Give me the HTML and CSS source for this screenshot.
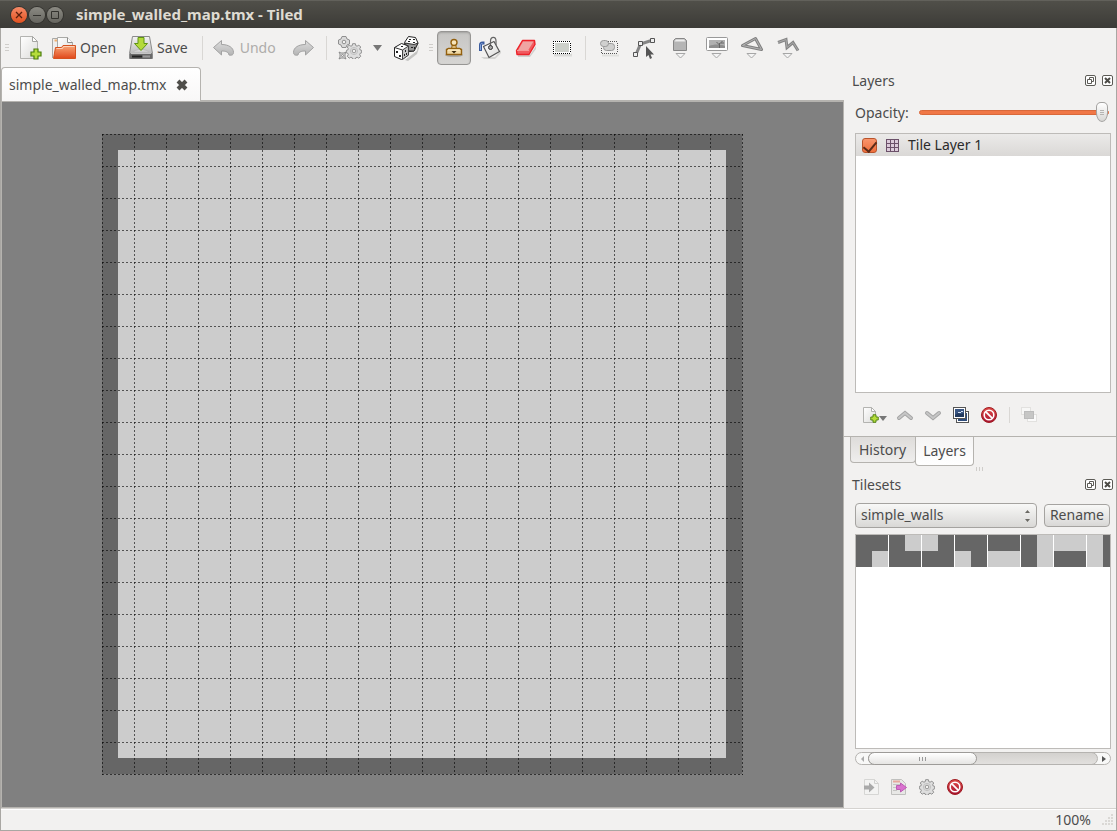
FILE: index.html
```
<!DOCTYPE html>
<html lang="en">
<head>
<meta charset="UTF-8">
<meta name="viewport" content="width=device-width, initial-scale=1.0">
<title>simple_walled_map.tmx - Tiled</title>
<link rel="stylesheet" href="styles.css">
</head>
<body>
    <!-- shared gradients and icons -->
    <svg class="defs" width="0" height="0" aria-hidden="true">
        <defs>
            <linearGradient id="paper" x1="0" y1="0" x2="1" y2="1"><stop offset="0" stop-color="#fff"/><stop offset="1" stop-color="#dcdcda"/></linearGradient>
            <linearGradient id="orange" x1="0" y1="0" x2="0" y2="1"><stop offset="0" stop-color="#f9a778"/><stop offset="1" stop-color="#e0481b"/></linearGradient>
            <linearGradient id="metal" x1="0" y1="0" x2="0" y2="1"><stop offset="0" stop-color="#f4f4f4"/><stop offset="1" stop-color="#a9a9a9"/></linearGradient>
            <linearGradient id="grey" x1="0" y1="0" x2="0" y2="1"><stop offset="0" stop-color="#dedede"/><stop offset="1" stop-color="#b4b4b4"/></linearGradient>
            <linearGradient id="red" x1="0" y1="0" x2="0" y2="1"><stop offset="0" stop-color="#e2504a"/><stop offset="1" stop-color="#a5102f"/></linearGradient>
        </defs>
        <symbol id="plus" viewBox="0 0 12 12">
            <path d="M4 1h4v3h3v4H8v3H4V8H1V4h3z" fill="#b6dd3c" stroke="#4a7d0c" stroke-width="1.2"/>
        </symbol>
        <symbol id="remove" viewBox="0 0 16 16">
            <circle cx="8" cy="8" r="7.5" fill="url(#red)" stroke="#a01c22"/>
            <circle cx="8" cy="8" r="4.8" fill="none" stroke="#fff" stroke-width="1.6"/>
            <path d="M4.600 4.600l6.800 6.800" stroke="#fff" stroke-width="1.8"/>
        </symbol>
        <symbol id="gear" viewBox="0 0 16 16">
            <path d="M6.600 .7h2.800l.4 2 1.300.5 1.700-1.100 1.900 1.900-1 1.700.5 1.300 1.500.4v2.400l-1.500.5-.5 1.300 1 1.700-1.900 1.900-1.700-1-1.300.5-.4 1.500H6.600l-.4-1.500-1.300-.5-1.700 1-1.900-1.900 1-1.700-.5-1.300-1.500-.5V7.400l1.500-.4.5-1.300-1-1.700 1.900-1.900 1.700 1.100 1.300-.5z" fill="#dedede" stroke="#8f8f8f" stroke-width="1"/>
            <circle cx="8" cy="8" r="3.600" fill="none" stroke="#c2c2c2"/>
            <circle cx="8" cy="8" r="1.800" fill="#f2f1f0" stroke="#969696"/>
        </symbol>
        <symbol id="float" viewBox="0 0 11 11">
            <rect x=".5" y=".5" width="10" height="10" rx="1.500" fill="#fff" stroke="#5c5b56"/>
            <path d="M4.500 4V2.500h4v4H7M2.500 4.500h4v4h-4z" fill="none" stroke="#5c5b56"/>
        </symbol>
        <symbol id="close" viewBox="0 0 11 11">
            <rect x=".5" y=".5" width="10" height="10" rx="1.500" fill="#fff" stroke="#5c5b56"/>
            <path d="M3 3l5 5M8 3L3 8" stroke="#4c4b46" stroke-width="2"/>
        </symbol>
        <symbol id="down" viewBox="0 0 11 6">
            <path d="M1 .5h9L5.500 5z" fill="#f4f4f4" stroke="#a6a6a6"/>
        </symbol>
    </svg>

    <header class="titlebar">
        <button class="win-btn win-close" aria-label="Close"><svg width="16" height="16"><path d="M5 5l6 6M11 5l-6 6" stroke="#5a1f0d" stroke-width="1.300"/></svg></button>
        <button class="win-btn" aria-label="Minimize"><svg width="16" height="16"><path d="M4 8.500h8" stroke="#33322e"/></svg></button>
        <button class="win-btn" aria-label="Maximize"><svg width="16" height="16"><path d="M4.500 4.500h7v7h-7z" fill="none" stroke="#33322e"/></svg></button>
        <h1>simple_walled_map.tmx - Tiled</h1>
    </header>

    <div class="window">
        <div class="toolbar" role="toolbar">
            <span class="grip"></span>
            <button class="tool" aria-label="New">
                <svg width="24" height="24">
                    <path d="M2.500 .5h12l5 5v17h-17z" fill="url(#paper)" stroke="#b3b3b0"/>
                    <path d="M14.500 .5v5h5z" fill="#fff" stroke="#a5a5a2"/>
                    <use href="#plus" x="12" y="12" width="12" height="12"/>
                </svg>
            </button>
            <button class="tool labeled">
                <svg width="24" height="24">
                    <path d="M.5 22V2.500h8v19" fill="#eee" stroke="#a9a9a6"/>
                    <path d="M2.500 4.500h4" stroke="#f0b070" stroke-width="2"/>
                    <path d="M5.500 20V1.500h10l5 5V20" fill="url(#paper)" stroke="#a9a9a6"/>
                    <path d="M15.500 1.500v5h5" fill="#fff" stroke="#8f8f8c"/>
                    <path d="M1.500 22.500L3.500 11.500h6l1.500-2h12.500v13z" fill="url(#orange)" stroke="#d5521f"/>
                    <path d="M4.500 12.500h6l1-2h11" fill="none" stroke="#fcd2b8"/>
                </svg>
                <span>Open</span>
            </button>
            <button class="tool labeled">
                <svg width="24" height="24">
                    <path d="M3.500 .5h17l3 17v5H.5v-5z" fill="url(#metal)" stroke="#8a8a8a"/>
                    <path d="M4.500 16c0-3 15-3 15 0z" fill="#e4e4e4" stroke="#bbb"/>
                    <rect x="1" y="17" width="22" height="6" rx="1" fill="#6a6a6a"/>
                    <path d="M2 17.500h20" stroke="#c5c5c5"/>
                    <path d="M3 20.500h10" stroke="#222" stroke-width="2"/>
                    <path d="M14 20.500h7" stroke="#999" stroke-width="2"/>
                    <path d="M9 1.500h6v6h3.500L12 14.500 5.500 7.500H9z" fill="#b4da3a" stroke="#5f9413"/>
                </svg>
                <span>Save</span>
            </button>
            <span class="sep"></span>
            <button class="tool labeled" disabled>
                <svg width="24" height="24">
                    <path d="M1.500 11.500l8-7v4c7 0 12 3 12 8 0 3-3 3-4.500 2.500-.5-3-3-4-7.500-4v4z" fill="url(#grey)" stroke="#a2a2a2" stroke-linejoin="round"/>
                </svg>
                <span>Undo</span>
            </button>
            <button class="tool" aria-label="Redo" disabled>
                <svg width="24" height="24">
                    <path d="M22.500 11.500l-8-7v4c-7 0-12 3-12 8 0 3 3 3 4.500 2.500.5-3 3-4 7.500-4v4z" fill="url(#grey)" stroke="#a2a2a2" stroke-linejoin="round"/>
                </svg>
            </button>
            <span class="sep"></span>
            <button class="tool" aria-label="Commands">
                <svg width="24" height="24">
                    <path d="M4 .5h4L9 3l2.500 1v4L9 9l-1 2.500H4L3 9 .5 8V4L3 3z" fill="#dadada" stroke="#8f8f8f"/>
                    <circle cx="6" cy="6" r="1.800" fill="#f2f1f0" stroke="#8f8f8f"/>
                    <use href="#gear" x="8" y="7" width="16" height="16"/>
                    <path d="M1 16l2 1h3l2-1-1 2v3l1 2-2-1H3l-2 1 1-2v-3z" fill="#ddd" stroke="#8a8a8a"/>
                    <circle cx="4.500" cy="19.500" r="1" fill="#f2f1f0" stroke="#8a8a8a"/>
                </svg>
            </button>
            <button class="drop" aria-label="Command list"><svg width="9" height="6"><path d="M0 0h9L4.500 6z" fill="#777"/></svg></button>
            <button class="tool" aria-label="Random Mode">
                <svg width="26" height="26">
                    <path d="M12 25l12-9 1-6 1 3-2 6-9 7z" fill="#c4c4c2"/>
                    <path d="M11.500 7.500l4-6 7 1 2.500 5.500-4 8-8 1z" fill="#fff" stroke="#222"/>
                    <path d="M12 8l9 1.500 4-1.500-4 8h-5z" fill="#999" stroke="#333"/>
                    <path d="M1.500 12.500l7-4 7 2.500v9l-7 4.500-7-3z" fill="#fff" stroke="#222" stroke-linejoin="round"/>
                    <path d="M9.500 15l6-4v9l-6 4.500z" fill="#c6c6c6" stroke="#444"/>
                    <path d="M1.500 12.500l8 2.500" stroke="#333"/>
                    <path d="M3 16h2v2H3zM6 20h2v2H6zM8 11h2v1H8zM12 15h1v2h-1zM11 19h1v2h-1zM13 18h1v2h-1zM16 4h2v1h-2zM20 4h2v1h-2zM15 6h2v1h-2zM20 7h2v1h-2zM18 12h2v1h-2zM21 12h1v2h-1z" fill="#222"/>
                </svg>
            </button>
            <span class="grip"></span>
            <button class="tool active" aria-label="Stamp Brush">
                <svg width="24" height="24">
                    <ellipse cx="12" cy="19" rx="9" ry="2" fill="#aaa"/>
                    <path d="M10.500 8.500h3l1 4h-5z" fill="#edcf93" stroke="#93600f"/>
                    <circle cx="12" cy="6.500" r="3" fill="#f7e4bb" stroke="#93600f" stroke-width="1.400"/>
                    <path d="M6.500 12.500h11l2 1v5h-15v-5z" fill="#f0d9a5" stroke="#93600f" stroke-width="1.400"/>
                    <path d="M6 14h12" stroke="#fff3d4"/>
                    <path d="M9.500 15h5L12 17.500z" fill="#3b2a0c"/>
                </svg>
            </button>
            <button class="tool" aria-label="Bucket Fill">
                <svg width="24" height="24">
                    <path d="M3 21h14l6-7v3l-6 6H6z" fill="#d4d4d2"/>
                    <path d="M2.500 15V9c0-1 .5-2 2-2h2" fill="none" stroke="#3b5c9e" stroke-width="3"/>
                    <path d="M2.500 14V9c0-1 .5-1.500 2-1.500" fill="none" stroke="#88a8dc"/>
                    <path d="M5.500 10.500L16 5.500l5.500 10-10.500 6z" fill="url(#paper)" stroke="#555" stroke-width="1.200" stroke-linejoin="round"/>
                    <path d="M12.500 11V5c0-5 5.500-4.500 5.500 0v4" fill="none" stroke="#666" stroke-width="1.200"/>
                    <circle cx="12.500" cy="11.500" r="2" fill="#aaa" stroke="#333"/>
                </svg>
            </button>
            <button class="tool" aria-label="Eraser">
                <svg width="24" height="24">
                    <path d="M4 19h12l6-9v3l-6 8H4z" fill="#cfcfcd"/>
                    <path d="M8.500 4.500h12l.5 4-6 10H3l-.500-4z" fill="#f15b60" stroke="#ec2229" stroke-width="1.400" stroke-linejoin="round"/>
                    <path d="M9 5.500h10.500l-5.500 9H4z" fill="#f0a4a2"/>
                    <path d="M3 14.500h12" stroke="#f79a9a"/>
                </svg>
            </button>
            <button class="tool" aria-label="Rectangular Select">
                <svg width="24" height="24">
                    <path d="M4 19h18" stroke="#dadad8" stroke-width="3"/>
                    <rect x="3" y="5" width="18" height="13" fill="#fff"/>
                    <rect x="5" y="7" width="14" height="9" fill="#cdd0ca"/>
                    <path d="M3 5.500h18M3 17.500h18M3.500 7v10M20.500 7v10" stroke="#000" stroke-dasharray="1 1"/>
                </svg>
            </button>
            <span class="sep"></span>
            <button class="tool" aria-label="Select Objects" disabled>
                <svg width="24" height="24">
                    <path d="M5 19.500h17" stroke="#e0e0de" stroke-width="2"/>
                    <path d="M9 5.500h12M5 17.500h16M4.500 12v6M20.500 7v10" stroke="#555" stroke-dasharray="1 1"/>
                    <rect x="6.500" y="7.500" width="11" height="7" rx="3" fill="#d0d0cf" stroke="#999"/>
                    <rect x="3.500" y="4.500" width="8" height="6" rx="3" fill="#d0d0cf" stroke="#999"/>
                </svg>
            </button>
            <button class="tool" aria-label="Edit Polygons" disabled>
                <svg width="24" height="24">
                    <path d="M3 18.500L7.500 8 20 4" fill="none" stroke="#858585" stroke-width="3"/>
                    <path d="M.5 16.500h4v4h-4zM5.500 5.500h4v4h-4zM17.500 2.500h4v4h-4z" fill="#eee" stroke="#555"/>
                    <path d="M13 10v11l2.500-2 1.500 4 2-1-1.500-3.500H21z" fill="#555"/>
                </svg>
            </button>
            <button class="tool" aria-label="Insert Rectangle" disabled>
                <svg width="24" height="24">
                    <path d="M6.500 2.500h9l2 2v10h-13v-10z" fill="#b5b5b5" stroke="#878787"/>
                    <path d="M7 3.500h8l1.500 2h-11z" fill="#eee"/>
                    <use href="#down" x="6" y="17" width="11" height="6"/>
                </svg>
            </button>
            <button class="tool" aria-label="Insert Tile" disabled>
                <svg width="24" height="24">
                    <rect x="1.500" y="1.500" width="21" height="13" rx="1" fill="#fff" stroke="#999"/>
                    <rect x="4" y="4" width="16" height="8" fill="#b0b0b0"/>
                    <path d="M4 10c5-2 11-2 16 0v2H4z" fill="#8e8e8e"/>
                    <path d="M14.500 12V7M14.500 9l-3-3M14.500 8l3-3M16 7h3" stroke="#666"/>
                    <use href="#down" x="6" y="17" width="11" height="6"/>
                </svg>
            </button>
            <button class="tool" aria-label="Insert Polygon" disabled>
                <svg width="24" height="24">
                    <path d="M1.500 9.500L14.500 2.500 20.500 13.500z" fill="#f2f1f0" stroke="#808080" stroke-width="3" stroke-linejoin="round"/>
                    <path d="M1.500 9.500L14.500 2.500 20.500 13.500z" fill="none" stroke="#b4b4b4" stroke-linejoin="round"/>
                    <use href="#down" x="5" y="17" width="11" height="6"/>
                </svg>
            </button>
            <button class="tool" aria-label="Insert Polyline" disabled>
                <svg width="24" height="24">
                    <path d="M1 6.500l8-3 1 8 6-5 5 8" fill="none" stroke="#858585" stroke-width="3"/>
                    <path d="M1 6.500l8-3 1 8 6-5 5 8" fill="none" stroke="#aaa"/>
                    <use href="#down" x="5" y="17" width="11" height="6"/>
                </svg>
            </button>
        </div>

        <main class="workspace">
            <section class="editor">
                <div class="doc-tabs">
                    <div class="doc-tab">
                        <span>simple_walled_map.tmx</span>
                        <button class="tab-close" aria-label="Close tab"><svg width="14" height="14"><path d="M3 3l8 8M11 3l-8 8" stroke="#4f4e4a" stroke-width="4"/></svg></button>
                    </div>
                </div>
                <div class="map-view">
                    <svg class="map" width="641" height="641">
                        <defs>
                            <pattern id="grid" width="32" height="32" patternUnits="userSpaceOnUse">
                                <path d="M0 .5h32M.5 0v32" stroke="#000" stroke-opacity=".6" stroke-dasharray="2 2"/>
                            </pattern>
                        </defs>
                        <rect width="640" height="640" fill="#666"/>
                        <rect x="16" y="16" width="608" height="608" fill="#ccc"/>
                        <rect width="641" height="641" fill="url(#grid)"/>
                    </svg>
                </div>
            </section>

            <aside class="docks">
                <section class="dock layers">
                    <div class="dock-title">
                        <h2>Layers</h2>
                        <button class="dock-btn" aria-label="Float"><svg width="11" height="11"><use href="#float"/></svg></button>
                        <button class="dock-btn" aria-label="Close"><svg width="11" height="11"><use href="#close"/></svg></button>
                    </div>
                    <div class="opacity">
                        <label for="opacity">Opacity:</label>
                        <input type="range" id="opacity" min="0" max="100" value="100">
                    </div>
                    <div class="layer-list">
                        <div class="layer">
                            <input type="checkbox" id="layer1" checked>
                            <svg width="13" height="13"><rect width="13" height="13" fill="#6b5069"/><path d="M1 1h3v3H1zM5 1h3v3H5zM9 1h3v3H9zM1 5h3v3H1zM5 5h3v3H5zM9 5h3v3H9zM1 9h3v3H1zM5 9h3v3H5zM9 9h3v3H9z" fill="#dccbda"/></svg>
                            <label for="layer1">Tile Layer 1</label>
                        </div>
                    </div>
                    <div class="dock-tools">
                        <button class="mini menu" aria-label="New Layer">
                            <svg width="24" height="16">
                                <path d="M.5 .5h8l4 4v11H.5z" fill="url(#paper)" stroke="#b3b3b0"/>
                                <path d="M8.500 .5v4h4z" fill="#fff" stroke="#b3b3b0"/>
                                <use href="#plus" x="7" y="7" width="9" height="9"/>
                                <path d="M16 9h8l-4 5z" fill="#777"/>
                            </svg>
                        </button>
                        <button class="mini" aria-label="Raise Layer" disabled><svg width="16" height="16"><path d="M2 11l6-5 6 5" fill="none" stroke="#a5a5a5" stroke-width="4" stroke-linecap="round"/><path d="M2 11l6-5 6 5" fill="none" stroke="#c6c6c6" stroke-width="2" stroke-linecap="round"/></svg></button>
                        <button class="mini" aria-label="Lower Layer" disabled><svg width="16" height="16"><path d="M2 6l6 5 6-5" fill="none" stroke="#a5a5a5" stroke-width="4" stroke-linecap="round"/><path d="M2 6l6 5 6-5" fill="none" stroke="#c6c6c6" stroke-width="2" stroke-linecap="round"/></svg></button>
                        <button class="mini" aria-label="Duplicate Layer">
                            <svg width="16" height="16">
                                <rect x="3.500" y="4.500" width="12" height="11" fill="#fff" stroke="#555"/>
                                <rect x="5" y="6" width="9" height="8" fill="#2f4d7c"/>
                                <rect x=".5" y=".5" width="12" height="11" fill="#fff" stroke="#555"/>
                                <rect x="2" y="2" width="9" height="8" fill="#3a5683"/>
                                <path d="M2 8l3-2 3 1 3-1v4H2z" fill="#223a5e"/>
                                <path d="M5 5h3v1H5zM8 4h2v1H8z" fill="#d6e2f3"/>
                            </svg>
                        </button>
                        <button class="mini" aria-label="Remove Layer"><svg width="16" height="16"><use href="#remove"/></svg></button>
                        <span class="sep short"></span>
                        <button class="mini" aria-label="Show other layers" disabled>
                            <svg width="16" height="16">
                                <rect x=".5" y=".5" width="9" height="7" fill="#f7f7f6" stroke="#e2e1df"/>
                                <rect x="6.500" y="7.500" width="9" height="7" fill="#fafafa" stroke="#e2e1df"/>
                                <rect x="3.500" y="4.500" width="9" height="7" fill="#c6c6c5" stroke="#bbb"/>
                            </svg>
                        </button>
                    </div>
                </section>

                <div class="dock-tabs" role="tablist">
                    <button class="dock-tab" role="tab">History</button>
                    <button class="dock-tab selected" role="tab" aria-selected="true">Layers</button>
                </div>
                <span class="grip flat"></span>

                <section class="dock tilesets">
                    <div class="dock-title">
                        <h2>Tilesets</h2>
                        <button class="dock-btn" aria-label="Float"><svg width="11" height="11"><use href="#float"/></svg></button>
                        <button class="dock-btn" aria-label="Close"><svg width="11" height="11"><use href="#close"/></svg></button>
                    </div>
                    <div class="tileset-row">
                        <div class="combo">
                            <select aria-label="Tileset"><option>simple_walls</option></select>
                            <svg width="7" height="13"><path d="M1 4h5L3.500 1zM1 10h5l-2.500 3z" fill="#6a6964"/></svg>
                        </div>
                        <button class="rename">Rename</button>
                    </div>
                    <div class="tiles">
                        <svg width="100%" height="32">
                            <path d="M0 0h32v32H0zM33 0h32v32H33zM66 0h32v32H66zM99 0h32v32H99zM132 0h32v32h-32zM165 0h32v32h-32zM198 0h32v32h-32zM231 0h32v32h-32z" fill="#666"/>
                            <path d="M16 16h16v16H16zM49 0h16v16H49zM66 0h16v16H66zM99 16h16v16H99zM132 16h32v16h-32zM181 0h16v32h-16zM198 0h32v16h-32zM231 0h16v32h-16z" fill="#ccc"/>
                        </svg>
                    </div>
                    <div class="scrollbar">
                        <button class="arrow" aria-label="Scroll left"><svg width="3" height="6"><path d="M3 0v6L0 3z" fill="#aaa"/></svg></button>
                        <div class="track"><span class="thumb"></span></div>
                        <button class="arrow" aria-label="Scroll right"><svg width="4" height="6"><path d="M0 0v6l4-3z" fill="#555"/></svg></button>
                    </div>
                    <div class="dock-tools">
                        <button class="mini" aria-label="Import Tileset" disabled>
                            <svg width="16" height="16">
                                <path d="M1.500 .5h10l4 4v11h-14z" fill="#f3f3f2" stroke="#d6d6d4"/>
                                <path d="M11.500 .5v4h4" fill="none" stroke="#d0d0ce"/>
                                <path d="M1 6.500h5v-3l5.500 5L6 13.500v-3H1z" fill="#a9a9a9"/>
                            </svg>
                        </button>
                        <button class="mini" aria-label="Export Tileset">
                            <svg width="16" height="16">
                                <path d="M.5 .5h10l4 4v11H.5z" fill="#e8e8e6" stroke="#c0c0be"/>
                                <path d="M2 2.500h7" stroke="#e6a89c" stroke-width="2"/>
                                <path d="M2 5.500h8M2 8.500h4M2 11.500h4" stroke="#c4c4c2"/>
                                <path d="M5.500 6.500h4v-2.500l6 4.500-6 4.500v-2.500h-4z" fill="#d972cf" stroke="#bd5cb4"/>
                            </svg>
                        </button>
                        <button class="mini" aria-label="Tileset Properties"><svg width="16" height="16"><use href="#gear"/></svg></button>
                        <button class="mini" aria-label="Remove Tileset"><svg width="16" height="16"><use href="#remove"/></svg></button>
                    </div>
                </section>
            </aside>
        </main>

        <footer class="statusbar">
            <span>100%</span>
            <svg width="12" height="12"><path d="M9 0h2v2H9zM6 3h2v2H6zM9 3h2v2H9zM3 6h2v2H3zM6 6h2v2H6zM9 6h2v2H9zM0 9h2v2H0zM3 9h2v2H3zM6 9h2v2H6zM9 9h2v2H9z" fill="#dad8d5"/></svg>
        </footer>
    </div>
</body>
</html>
```
FILE: styles.css
```
* {
    box-sizing: border-box;
}
body {
    font-family: "Noto Sans", "Open Sans", sans-serif;
    font-size: 14px;
    line-height: 20px;
    color: #4c4c4c;
    margin: 0;
    height: 100vh;
    display: flex;
    flex-direction: column;
    background: #f2f1f0;
    overflow: hidden;
}
.defs {
    position: absolute;
}
svg {
    display: block;
    flex: none;
}
button {
    font: inherit;
    color: inherit;
    background: none;
    border: 0;
    margin: 0;
    padding: 0;
}
h1, h2 {
    margin: 0;
    font-size: 14px;
}

/* Title bar */
.titlebar {
    height: 28px;
    flex: none;
    display: flex;
    align-items: center;
    gap: 2px;
    padding: 0 11px;
    background: linear-gradient(#504f49, #3c3b37);
    border-top: 1px solid #62615b;
}
.titlebar h1 {
    font-size: 15px;
    line-height: 18px;
    color: #dfdbd2;
    margin: 0 0 2px 11px;
}
.win-btn {
    width: 16px;
    height: 16px;
    border-radius: 50%;
    background: linear-gradient(#8b8a83, #66655f);
    box-shadow: 0 0 0 1px #33322e;
}
.win-close {
    background: linear-gradient(#f58a67, #e2511f);
}

.window {
    flex: 1;
    display: flex;
    flex-direction: column;
    min-height: 0;
    border: 1px solid #a9a7a3;
    border-top: 0;
}

/* Toolbar */
.toolbar {
    height: 39px;
    flex: none;
    display: flex;
    align-items: center;
    gap: 2px;
    padding-left: 4px;
}
.grip {
    width: 4px;
    height: 8px;
    margin-right: 2px;
    background: repeating-linear-gradient(#cfcdca 0 1px, transparent 1px 3px);
}
.tool + .grip {
    margin-left: 4px;
}
.grip.flat {
    width: 8px;
    height: 4px;
    margin: 1px auto 0;
    background: repeating-linear-gradient(90deg, #cfcdca 0 1px, transparent 1px 3px);
}
.tool {
    width: 34px;
    height: 34px;
    display: flex;
    align-items: center;
    justify-content: center;
    gap: 4px;
}
.tool.labeled {
    width: auto;
    padding: 0 8px 0 3px;
}
.tool.active {
    background: linear-gradient(#c6c5c3, #d6d5d3);
    border: 1px solid #979694;
    border-radius: 4px;
    box-shadow: inset 0 1px 2px #a3a2a0;
}
.tool:disabled {
    color: #aeacaa;
}
.drop {
    width: 18px;
    display: flex;
    justify-content: center;
}
.sep {
    width: 1px;
    height: 24px;
    margin: 0 4px;
    background: #d9d7d4;
}
.sep.short {
    height: 16px;
}

/* Editor */
.workspace {
    flex: 1;
    display: flex;
    min-height: 0;
}
.editor {
    flex: 1;
    display: flex;
    flex-direction: column;
    min-width: 0;
}
.doc-tabs {
    height: 34px;
    flex: none;
    display: flex;
    border-bottom: 1px solid #b5b3af;
}
.doc-tab {
    height: 34px;
    display: flex;
    align-items: center;
    gap: 9px;
    padding: 0 11px 0 7px;
    background: linear-gradient(#fff, #f8f7f7);
    border: 1px solid #b5b3af;
    border-bottom: 0;
    border-radius: 4px 4px 0 0;
}
.map-view {
    flex: 1;
    display: flex;
    align-items: center;
    justify-content: center;
    min-height: 0;
    background: #808080;
    border: 1px solid #b5b3af;
}

/* Docks */
.docks {
    width: 272px;
    flex: none;
    display: flex;
    flex-direction: column;
}
.dock {
    display: flex;
    flex-direction: column;
    padding: 0 5px 0 11px;
}
.layers {
    height: 370px;
    border-bottom: 1px solid #b5b3af;
}
.tilesets {
    flex: 1;
    min-height: 0;
}
.dock-title {
    height: 27px;
    flex: none;
    display: flex;
    align-items: center;
    gap: 6px;
    margin: 0 -2px 0 -3px;
}
.dock-title h2 {
    flex: 1;
    font-weight: normal;
}
.opacity {
    height: 37px;
    flex: none;
    display: flex;
    align-items: center;
    gap: 10px;
}
.opacity input {
    flex: 1;
    min-width: 0;
    height: 20px;
    margin: 0 2px 0 0;
    appearance: none;
    background: none;
}
.opacity input::-webkit-slider-runnable-track {
    height: 5px;
    background: #f07746;
    border: 1px solid #d9683a;
    border-radius: 3px;
}
.opacity input::-webkit-slider-thumb {
    appearance: none;
    width: 12px;
    height: 20px;
    margin-top: -9px;
    background: repeating-linear-gradient(#b5b4b2 0 1px, transparent 1px 2px) center / 4px 5px no-repeat, linear-gradient(#fff, #d8d7d5);
    border: 1px solid #a3a2a0;
    border-radius: 5px 5px 6px 6px / 5px 5px 9px 9px;
}
.layer-list {
    flex: 1;
    min-height: 0;
    margin-top: 2px;
    background: #fff;
    border: 1px solid #bdbbb8;
}
.layer {
    height: 22px;
    display: flex;
    align-items: center;
    gap: 9px;
    padding-left: 6px;
    color: #2b2b2b;
    background: linear-gradient(#ebeae9, #dad8d6);
}
.layer input {
    appearance: none;
    width: 15px;
    height: 15px;
    margin: 0;
    display: grid;
    place-items: center;
    background: linear-gradient(#f9956c, #ef6f3d);
    border: 1px solid #b9532b;
    border-radius: 3px;
}
.layer input:checked::after {
    content: "";
    width: 6px;
    height: 11px;
    margin-bottom: 4px;
    border: solid #5b2b18;
    border-width: 0 2px 2px 0;
    transform: rotate(40deg);
}
.dock-tools {
    height: 43px;
    flex: none;
    display: flex;
    align-items: center;
    gap: 12px;
    padding-left: 8px;
}
.dock-tools .sep {
    margin: 0 -1px 0 0;
}
.mini.menu {
    width: 22px;
}
.mini svg {
    overflow: visible;
}
.dock-tabs {
    height: 29px;
    flex: none;
    display: flex;
    align-items: flex-start;
    padding-left: 6px;
}
.dock-tab {
    height: 26px;
    padding: 0 9px 0 8px;
    background: linear-gradient(#dedcda, #efeeed);
    border: 1px solid #b5b3af;
    border-top: 0;
    border-radius: 0 0 4px 4px;
}
.dock-tab.selected {
    height: 29px;
    padding: 0 7px;
    margin-left: -1px;
    background: linear-gradient(#f5f4f4, #fff);
}

/* Tilesets */
.tileset-row {
    height: 34px;
    flex: none;
    display: flex;
    align-items: center;
    gap: 7px;
    padding-right: 1px;
}
.combo {
    flex: 1;
    display: grid;
    align-items: center;
}
.combo select, .combo svg {
    grid-area: 1 / 1;
}
.combo svg {
    justify-self: end;
    margin-right: 6px;
    pointer-events: none;
}
.combo select {
    width: 100%;
    height: 25px;
    padding: 0 5px;
    font: inherit;
    color: inherit;
    appearance: none;
}
.combo select, .rename {
    background: linear-gradient(#f8f8f7, #d9d8d6);
    border: 1px solid #a5a3a0;
    border-radius: 4px;
}
.rename {
    height: 23px;
    padding: 0 5px;
}
.tiles {
    flex: 1;
    min-height: 0;
    margin-top: 2px;
    background: #fff;
    border: 1px solid #bdbbb8;
    overflow: hidden;
}
.scrollbar {
    height: 13px;
    flex: none;
    display: flex;
    margin-top: 3px;
    background: #f8f8f7;
    border: 1px solid #b5b3b0;
    border-radius: 7px;
}
.arrow {
    width: 12px;
    display: grid;
    place-items: center;
}
.track {
    flex: 1;
    display: flex;
    margin: -1px 0;
    background: linear-gradient(#d3d1ce, #e2e0de);
    border: 1px solid #b5b3b0;
    border-radius: 7px;
}
.thumb {
    width: 48%;
    margin: -1px;
    background: repeating-linear-gradient(90deg, #999 0 1px, transparent 1px 3px) center / 7px 4px no-repeat, linear-gradient(#fff, #e6e5e3);
    border: 1px solid #9d9b98;
    border-radius: 7px;
}

/* Status bar */
.statusbar {
    height: 22px;
    flex: none;
    display: flex;
    align-items: center;
    justify-content: flex-end;
    gap: 11px;
    padding: 1px 2px 0 0;
    border-top: 1px solid #d5d3d0;
    box-shadow: inset 0 1px #fff;
}
```
